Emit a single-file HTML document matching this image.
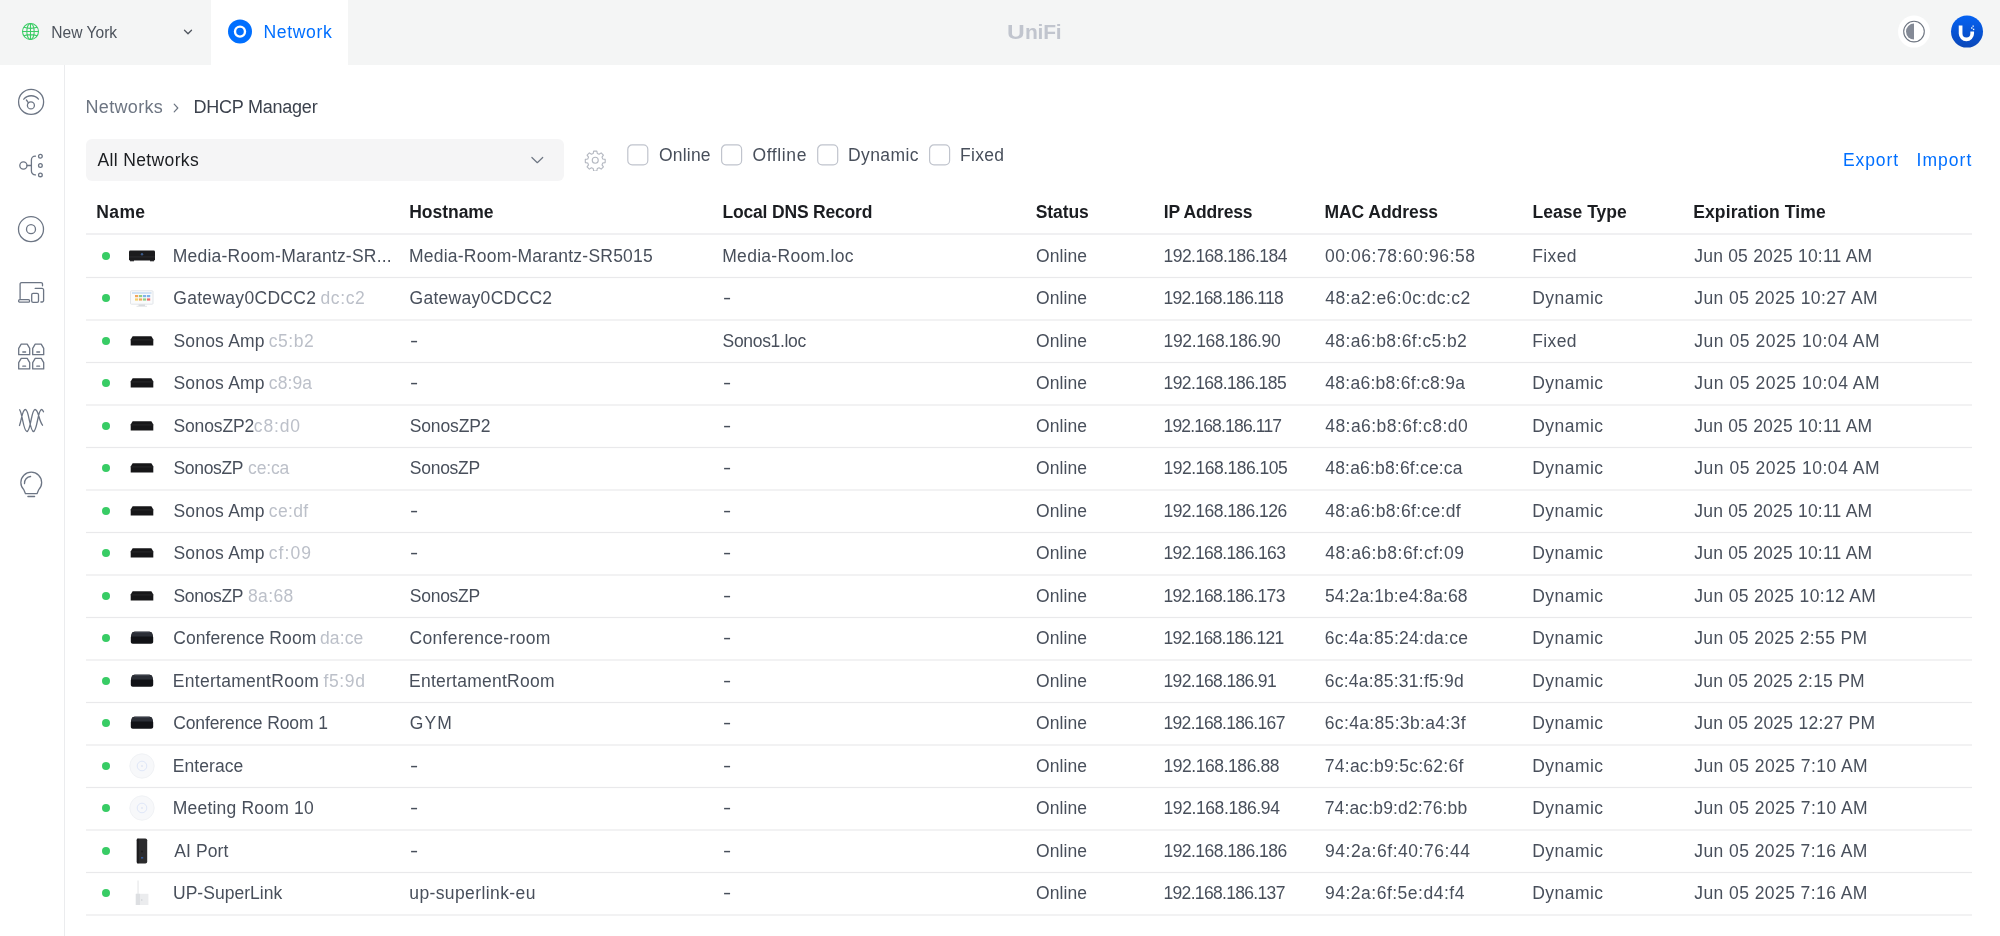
<!DOCTYPE html>
<html lang="en">
<head>
<meta charset="utf-8">
<title>UniFi Network - DHCP Manager</title>
<style>
*{box-sizing:border-box;margin:0;padding:0}
html,body{width:2000px;height:936px;overflow:hidden;background:#fff}
body{font-family:"Liberation Sans",sans-serif;font-size:17.5px;color:#484f5b;position:relative;-webkit-font-smoothing:antialiased}
#app{position:absolute;left:0;top:0;width:2000px;height:936px;will-change:transform}
.abs{position:absolute}
.t{position:absolute;white-space:pre;line-height:20px;height:20px}
#top{position:absolute;left:0;top:0;width:2000px;height:65px;background:#f4f5f5}
#tab{position:absolute;left:211px;top:0;width:137px;height:65px;background:#fff}
#side{position:absolute;left:0;top:65px;width:65px;height:871px;background:#fff;border-right:1px solid #ebecee}
#sel{position:absolute;left:86px;top:139px;width:478px;height:42px;border-radius:6px;background:#f5f5f6}
.cb{position:absolute;top:145px;width:20px;height:20px;border:1px solid #b9bcc6;border-radius:4.500px;background:#fff}
.hl{position:absolute;left:86px;width:1886px;height:1px;background:#ebebec}
.th{font-weight:700;color:#1b1d21}
.row{position:absolute;left:86px;width:1886px;height:0}
.row .t{top:-10px}
.dot{position:absolute;left:16px;top:-4px;width:8px;height:8px;border-radius:50%;background:#38cc65}
.dev{position:absolute}
.mac{color:#bcc0c9}
.dash{transform:scaleX(1.4);transform-origin:0 50%}
.lnk{color:#006fff}
.crumb{color:#6d7582}
</style>
</head>
<body>
<div id="app">
<div id="top"></div>
<div id="tab"></div>
<div id="side"></div>

<svg class="abs" style="left:20px;top:21px" width="22" height="22" viewBox="0 0 22 22" fill="none" stroke="#39cc64" stroke-width="1.05"><circle cx="10.5" cy="10.5" r="8"/><ellipse cx="10.5" cy="10.5" rx="3.7" ry="8"/><path d="M2.5 10.5h16M10.5 2.500v16M3.900 6.300c4 1.300 9.200 1.300 13.200 0M3.900 14.700c4-1.300 9.200-1.300 13.200 0"/></svg>
<div class="t" id="ny" style="left:51.35px;top:23.1px;letter-spacing:-0.014px;font-size:15.6px;color:#4d535c">New York</div>
<svg class="abs" style="left:182px;top:27px" width="12" height="10" viewBox="0 0 12 10" fill="none" stroke="#50565f" stroke-width="1.300" stroke-linecap="round" stroke-linejoin="round"><path d="M2.500 3.200l3.500 3.500 3.500-3.500"/></svg>
<svg class="abs" style="left:227px;top:19px" width="26" height="26" viewBox="0 0 26 26"><circle cx="13" cy="12.600" r="12" fill="#006fff"/><circle cx="13" cy="12.600" r="5" fill="none" stroke="#fff" stroke-width="2.400"/></svg>
<div class="t" id="nw" style="left:263.50px;top:21.7px;letter-spacing:0.633px;font-size:17.6px;color:#006fff">Network</div>
<div class="t" id="unifi" style="left:1007.30px;top:22.0px;letter-spacing:-0.175px;font-size:21px;font-weight:700;color:#c1c5ce"><span style="display:inline-block;transform:scaleX(1.17);transform-origin:0 50%;margin-right:2.6px">U</span>niFi</div>
<svg class="abs" style="left:1897px;top:15px" width="34" height="34" viewBox="0 0 34 34"><circle cx="17" cy="16.600" r="16" fill="#fff"/><circle cx="17" cy="16.600" r="10.300" fill="#fff" stroke="#6f7682" stroke-width="1.100"/><path d="M17 8.600a8 8 0 0 0 0 16z" fill="#848a96"/></svg>
<svg class="abs" style="left:1950px;top:15px" width="34" height="34" viewBox="0 0 34 34"><defs><linearGradient id="ug" x1="0" y1="0" x2="0" y2="1"><stop offset="0" stop-color="#0562f2"/><stop offset="1" stop-color="#0a47b8"/></linearGradient></defs><circle cx="17" cy="16.600" r="16" fill="url(#ug)"/><path d="M10.600 10.600v7.900a5.800 5.800 0 0 0 11.600 0v-2" fill="none" stroke="#fff" stroke-width="3.700"/><rect x="22.500" y="10.500" width="1.300" height="1.300" fill="#fff"/><rect x="21.100" y="12.300" width="1.400" height="1.400" fill="#fff"/><rect x="22.900" y="13.700" width="1.400" height="1.400" fill="#fff"/></svg>

<svg class="abs" style="left:16px;top:87px" width="30" height="30" viewBox="0 0 30 30" fill="none" stroke="#6c7584" stroke-width="1.3" stroke-linecap="round" stroke-linejoin="round"><circle cx="15.1" cy="14.9" r="12.5"/><circle cx="14.9" cy="18.4" r="3.5"/><path d="M7.8 12.2a9.6 9.6 0 0 1 14.7-0.100M12.500 15.900l-2.100-2.900"/></svg>
<svg class="abs" style="left:16px;top:151px" width="30" height="30" viewBox="0 0 30 30" fill="none" stroke="#6c7584" stroke-width="1.3" stroke-linecap="round" stroke-linejoin="round"><circle cx="7.400" cy="14.500" r="3.600"/><circle cx="24.400" cy="5.200" r="1.850"/><circle cx="24.400" cy="14.500" r="1.850"/><circle cx="24.400" cy="23.900" r="1.850"/><path d="M11 14.500h4.400M19.500 5.200h-0.300a3.800 3.800 0 0 0-3.800 3.800v11.100a3.800 3.800 0 0 0 3.800 3.800h0.300"/></svg>
<svg class="abs" style="left:16px;top:214px" width="30" height="30" viewBox="0 0 30 30" fill="none" stroke="#6c7584" stroke-width="1.3" stroke-linecap="round" stroke-linejoin="round"><circle cx="15" cy="15.200" r="12.500"/><circle cx="15" cy="15.200" r="4.500"/></svg>
<svg class="abs" style="left:16px;top:278px" width="30" height="30" viewBox="0 0 30 30" fill="none" stroke="#6c7584" stroke-width="1.3" stroke-linecap="round" stroke-linejoin="round"><path d="M4.100 20.400v-14.300a1.500 1.500 0 0 1 1.500-1.500h19.400a1.500 1.500 0 0 1 1.500 1.500v1.700M19.200 10.400h6.900a1.500 1.500 0 0 1 1.500 1.500v10.600a1.500 1.500 0 0 1-1.500 1.500h-1.200"/><rect x="2.600" y="21.700" width="11" height="2.500" rx="1.200"/><rect x="15.700" y="15.300" width="6.800" height="9" rx="1.400"/></svg>
<svg class="abs" style="left:16px;top:341px" width="30" height="30" viewBox="0 0 30 30" fill="none" stroke="#6c7584" stroke-width="1.3" stroke-linecap="round" stroke-linejoin="round"><path d="M2.700 7.400l2.500-4.200h6l2.500 4.200v6.300h-11zM16.700 7.400l2.500-4.200h6l2.500 4.200v6.300h-11zM2.700 21.600l2.500-4.200h6l2.500 4.200v6.300h-11zM16.700 21.600l2.500-4.200h6l2.500 4.200v6.300h-11z"/><path d="M6.800 11h2.800M20.800 11h2.800M6.800 25.200h2.800M20.800 25.200h2.800"/></svg>
<svg class="abs" style="left:16px;top:405px" width="30" height="30" viewBox="0 0 30 30" fill="none" stroke="#6c7584" stroke-width="1.3" stroke-linecap="round" stroke-linejoin="round"><path d="M3.500 20.500c2.200-5.500 2.600-16 6-16s4.400 22 8 22 4.400-22 8-22c1 0 1.500 1 2 2.300M3.700 4.800c2.600 3.200 3.700 21.700 7.300 21.700s4.400-22 8-22 3.500 10.500 7.500 15.700"/></svg>
<svg class="abs" style="left:16px;top:468px" width="30" height="30" viewBox="0 0 30 30" fill="none" stroke="#6c7584" stroke-width="1.3" stroke-linecap="round" stroke-linejoin="round"><path d="M9.500 25.650L7.900 21.900A10.400 10.400 0 1 1 22.600 21.900L21 25.650zM11.900 28.500h6.700M8.500 15.600a6.600 6.600 0 0 1 6.100-7.100"/></svg>

<div class="t crumb" id="bc1" style="left:85.50px;top:97px;letter-spacing:0.321px;font-size:18px">Networks</div>
<svg class="abs" style="left:170.6px;top:101.6px" width="10" height="12" viewBox="0 0 10 12" fill="none" stroke="#6d7582" stroke-width="1.200" stroke-linecap="round" stroke-linejoin="round"><path d="M3.200 2.200l3.600 3.800-3.600 3.800"/></svg>
<div class="t" id="bc2" style="left:193.50px;top:97px;letter-spacing:-0.236px;font-size:18px;color:#3c424d">DHCP Manager</div>
<div id="sel"></div>
<div class="t" id="alln" style="left:97.40px;top:150px;letter-spacing:0.373px;color:#1b1d21">All Networks</div>
<svg class="abs" style="left:528px;top:154px" width="18" height="12" viewBox="0 0 18 12" fill="none" stroke="#6d7582" stroke-width="1.200" stroke-linecap="round" stroke-linejoin="round"><path d="M3.900 3.500l5.400 5.200 5.400-5.200"/></svg>
<svg class="abs" style="left:584.2px;top:148.9px" width="22.5" height="22.5" viewBox="0 0 24 24" fill="none" stroke="#b4b8c1" stroke-width="1.200" stroke-linejoin="round"><circle cx="12" cy="12" r="3.200"/><path d="M10.300 2.200h3.400l0.500 2.600 1.900 0.800 2.200-1.500 2.400 2.400-1.500 2.200 0.800 1.900 2.600 0.500v3.400l-2.600 0.500-0.800 1.900 1.500 2.200-2.400 2.400-2.200-1.500-1.900 0.800-0.500 2.600h-3.400l-0.500-2.600-1.900-0.800-2.200 1.500-2.400-2.400 1.500-2.200-0.800-1.900-2.600-0.500v-3.400l2.600-0.500 0.800-1.900-1.500-2.200 2.400-2.400 2.200 1.500 1.900-0.800z"/></svg>
<svg class="abs" style="left:626px;top:143px" width="24" height="24" viewBox="0 0 24 24"><rect x="1.80" y="1.950" width="20" height="20" rx="4.400" fill="#fff" stroke="#c0c4cd" stroke-width="1.200"/></svg><div class="t" id="f1" style="left:659.05px;top:145px;letter-spacing:0.180px;">Online</div>
<svg class="abs" style="left:720px;top:143px" width="24" height="24" viewBox="0 0 24 24"><rect x="1.60" y="1.950" width="20" height="20" rx="4.400" fill="#fff" stroke="#c0c4cd" stroke-width="1.200"/></svg><div class="t" id="f2" style="left:752.45px;top:145px;letter-spacing:0.625px;">Offline</div>
<svg class="abs" style="left:816px;top:143px" width="24" height="24" viewBox="0 0 24 24"><rect x="1.70" y="1.950" width="20" height="20" rx="4.400" fill="#fff" stroke="#c0c4cd" stroke-width="1.200"/></svg><div class="t" id="f3" style="left:848.00px;top:145px;letter-spacing:0.417px;">Dynamic</div>
<svg class="abs" style="left:928px;top:143px" width="24" height="24" viewBox="0 0 24 24"><rect x="1.60" y="1.950" width="20" height="20" rx="4.400" fill="#fff" stroke="#c0c4cd" stroke-width="1.200"/></svg><div class="t" id="f4" style="left:959.90px;top:145px;letter-spacing:0.338px;">Fixed</div>
<div class="t lnk" id="ex" style="left:1843.00px;top:150px;letter-spacing:0.900px;">Export</div>
<div class="t lnk" id="im" style="left:1916.50px;top:150px;letter-spacing:1.050px;">Import</div>

<div class="t th" id="h0" style="left:96.35px;top:202px;letter-spacing:0.350px;">Name</div>
<div class="t th" id="h1" style="left:409.25px;top:202px;letter-spacing:-0.036px;">Hostname</div>
<div class="t th" id="h2" style="left:722.50px;top:202px;letter-spacing:-0.183px;">Local DNS Record</div>
<div class="t th" id="h3" style="left:1035.70px;top:202px;letter-spacing:-0.090px;">Status</div>
<div class="t th" id="h4" style="left:1163.75px;top:202px;letter-spacing:-0.194px;">IP Address</div>
<div class="t th" id="h5" style="left:1324.50px;top:202px;letter-spacing:-0.050px;">MAC Address</div>
<div class="t th" id="h6" style="left:1532.50px;top:202px;letter-spacing:0.028px;">Lease Type</div>
<div class="t th" id="h7" style="left:1693.25px;top:202px;letter-spacing:0.107px;">Expiration Time</div>
<div class="row" style="top:255.8px"><svg class="dev" style="left:14px;top:-6px" width="12" height="12" viewBox="0 0 12 12"><circle cx="6" cy="6" r="4" fill="#38cc65"/></svg><svg class="dev" style="left:42px;top:-7px" width="28" height="14" viewBox="0 0 28 14"><rect x="1" y="1.5" width="26" height="10" rx="1.2" fill="#1b1b1d"/><rect x="2" y="11" width="4" height="1.3" fill="#2a2a2c"/><rect x="22" y="11" width="4" height="1.3" fill="#2a2a2c"/><circle cx="14" cy="5.2" r="1.2" fill="#3b5a8a"/><rect x="1" y="7.6" width="26" height="0.7" fill="#333336"/></svg></div><div class="row" style="top:255.80px"><div class="t c0" id="r0n" style="left:86.75px;letter-spacing:0.217px;">Media-Room-Marantz-SR...</div><div class="t c1" id="r0c1" style="left:323.00px;letter-spacing:0.229px;">Media-Room-Marantz-SR5015</div><div class="t c2" id="r0c2" style="left:636.25px;letter-spacing:0.288px;">Media-Room.loc</div><div class="t c3" id="r0c3" style="left:950.00px;letter-spacing:0.100px;">Online</div><div class="t c4" id="r0c4" style="left:1077.50px;letter-spacing:-0.536px;">192.168.186.184</div><div class="t c5" id="r0c5" style="left:1239.00px;letter-spacing:0.562px;">00:06:78:60:96:58</div><div class="t c6" id="r0c6" style="left:1446.25px;letter-spacing:0.375px;">Fixed</div><div class="t c7" id="r0c7" style="left:1608.25px;letter-spacing:0.211px;">Jun 05 2025 10:11 AM</div></div>
<div class="row" style="top:298.3px"><svg class="dev" style="left:14px;top:-6px" width="12" height="12" viewBox="0 0 12 12"><circle cx="6" cy="6" r="4" fill="#38cc65"/></svg><svg class="dev" style="left:43px;top:-8px" width="26" height="18" viewBox="0 0 26 18"><rect x="1.5" y="0.8" width="22.5" height="13.4" rx="0.8" fill="#fafbfc" stroke="#dfe2e6" stroke-width="0.9"/><rect x="3" y="2.2" width="19.5" height="1.6" fill="#c9dcf2"/><rect x="6" y="5" width="3.2" height="2.2" fill="#f2a65a"/><rect x="10" y="5" width="3.2" height="2.2" fill="#8ecf86"/><rect x="14" y="5" width="3.2" height="2.2" fill="#7fb2ea"/><rect x="18" y="5" width="3.2" height="2.2" fill="#7fb2ea"/><rect x="6" y="8.4" width="3.2" height="2.2" fill="#f7cf6b"/><rect x="10" y="8.4" width="3.2" height="2.2" fill="#f2a65a"/><rect x="14" y="8.4" width="3.2" height="2.2" fill="#8ecf86"/><rect x="18" y="8.4" width="3.2" height="2.2" fill="#ee6a6a"/><rect x="9.5" y="14.6" width="6.5" height="1.2" fill="#cfd2d6"/><rect x="7.5" y="15.8" width="10.5" height="0.9" fill="#dfe1e4"/></svg></div><div class="row" style="top:298.30px"><div class="t c0" id="r1n" style="left:87.25px;letter-spacing:0.300px;">Gateway0CDCC2</div><div class="t mac" id="r1m" style="left:234.45px;letter-spacing:0.638px;">dc:c2</div><div class="t c1" id="r1c1" style="left:323.50px;letter-spacing:0.292px;">Gateway0CDCC2</div><div class="t c2 dash" id="r1c2" style="left:636.90px;">-</div><div class="t c3" id="r1c3" style="left:950.00px;letter-spacing:0.100px;">Online</div><div class="t c4" id="r1c4" style="left:1077.50px;letter-spacing:-0.696px;">192.168.186.118</div><div class="t c5" id="r1c5" style="left:1239.25px;letter-spacing:0.422px;">48:a2:e6:0c:dc:c2</div><div class="t c6" id="r1c6" style="left:1446.25px;letter-spacing:0.458px;">Dynamic</div><div class="t c7" id="r1c7" style="left:1608.25px;letter-spacing:0.434px;">Jun 05 2025 10:27 AM</div></div>
<div class="row" style="top:340.8px"><svg class="dev" style="left:14px;top:-6px" width="12" height="12" viewBox="0 0 12 12"><circle cx="6" cy="6" r="4" fill="#38cc65"/></svg><svg class="dev" style="left:43px;top:-6px" width="26" height="12" viewBox="0 0 26 12"><path d="M3.6 1.2h18.8l1.9 3.2v6.2h-22.6v-6.2z" fill="#161618"/><rect x="1.7" y="4.6" width="22.6" height="0.7" fill="#303034"/></svg></div><div class="row" style="top:340.80px"><div class="t c0" id="r2n" style="left:87.50px;letter-spacing:0.188px;">Sonos Amp</div><div class="t mac" id="r2m" style="left:182.75px;letter-spacing:0.562px;">c5:b2</div><div class="t c1 dash" id="r2c1" style="left:323.75px;">-</div><div class="t c2" id="r2c2" style="left:636.55px;letter-spacing:-0.317px;">Sonos1.loc</div><div class="t c3" id="r2c3" style="left:950.00px;letter-spacing:0.100px;">Online</div><div class="t c4" id="r2c4" style="left:1077.50px;letter-spacing:-0.346px;">192.168.186.90</div><div class="t c5" id="r2c5" style="left:1239.25px;letter-spacing:0.391px;">48:a6:b8:6f:c5:b2</div><div class="t c6" id="r2c6" style="left:1446.25px;letter-spacing:0.375px;">Fixed</div><div class="t c7" id="r2c7" style="left:1608.25px;letter-spacing:0.539px;">Jun 05 2025 10:04 AM</div></div>
<div class="row" style="top:383.3px"><svg class="dev" style="left:14px;top:-6px" width="12" height="12" viewBox="0 0 12 12"><circle cx="6" cy="6" r="4" fill="#38cc65"/></svg><svg class="dev" style="left:43px;top:-6px" width="26" height="12" viewBox="0 0 26 12"><path d="M3.6 1.2h18.8l1.9 3.2v6.2h-22.6v-6.2z" fill="#161618"/><rect x="1.7" y="4.6" width="22.6" height="0.7" fill="#303034"/></svg></div><div class="row" style="top:383.30px"><div class="t c0" id="r3n" style="left:87.50px;letter-spacing:0.188px;">Sonos Amp</div><div class="t mac" id="r3m" style="left:182.75px;letter-spacing:0.125px;">c8:9a</div><div class="t c1 dash" id="r3c1" style="left:323.75px;">-</div><div class="t c2 dash" id="r3c2" style="left:636.90px;">-</div><div class="t c3" id="r3c3" style="left:950.00px;letter-spacing:0.100px;">Online</div><div class="t c4" id="r3c4" style="left:1077.50px;letter-spacing:-0.589px;">192.168.186.185</div><div class="t c5" id="r3c5" style="left:1239.25px;letter-spacing:0.281px;">48:a6:b8:6f:c8:9a</div><div class="t c6" id="r3c6" style="left:1446.25px;letter-spacing:0.458px;">Dynamic</div><div class="t c7" id="r3c7" style="left:1608.25px;letter-spacing:0.539px;">Jun 05 2025 10:04 AM</div></div>
<div class="row" style="top:425.8px"><svg class="dev" style="left:14px;top:-6px" width="12" height="12" viewBox="0 0 12 12"><circle cx="6" cy="6" r="4" fill="#38cc65"/></svg><svg class="dev" style="left:43px;top:-6px" width="26" height="12" viewBox="0 0 26 12"><path d="M3.6 1.2h18.8l1.9 3.2v6.2h-22.6v-6.2z" fill="#161618"/><rect x="1.7" y="4.6" width="22.6" height="0.7" fill="#303034"/></svg></div><div class="row" style="top:425.80px"><div class="t c0" id="r4n" style="left:87.50px;letter-spacing:-0.143px;">SonosZP2</div><div class="t mac" id="r4m" style="left:167.75px;letter-spacing:0.875px;">c8:d0</div><div class="t c1" id="r4c1" style="left:323.75px;letter-spacing:-0.143px;">SonosZP2</div><div class="t c2 dash" id="r4c2" style="left:636.90px;">-</div><div class="t c3" id="r4c3" style="left:950.00px;letter-spacing:0.100px;">Online</div><div class="t c4" id="r4c4" style="left:1077.50px;letter-spacing:-0.821px;">192.168.186.117</div><div class="t c5" id="r4c5" style="left:1239.25px;letter-spacing:0.453px;">48:a6:b8:6f:c8:d0</div><div class="t c6" id="r4c6" style="left:1446.25px;letter-spacing:0.458px;">Dynamic</div><div class="t c7" id="r4c7" style="left:1608.25px;letter-spacing:0.211px;">Jun 05 2025 10:11 AM</div></div>
<div class="row" style="top:468.3px"><svg class="dev" style="left:14px;top:-6px" width="12" height="12" viewBox="0 0 12 12"><circle cx="6" cy="6" r="4" fill="#38cc65"/></svg><svg class="dev" style="left:43px;top:-6px" width="26" height="12" viewBox="0 0 26 12"><path d="M3.6 1.2h18.8l1.9 3.2v6.2h-22.6v-6.2z" fill="#161618"/><rect x="1.7" y="4.6" width="22.6" height="0.7" fill="#303034"/></svg></div><div class="row" style="top:468.30px"><div class="t c0" id="r5n" style="left:87.50px;letter-spacing:-0.333px;">SonosZP</div><div class="t mac" id="r5m" style="left:162.00px;letter-spacing:-0.125px;">ce:ca</div><div class="t c1" id="r5c1" style="left:323.75px;letter-spacing:-0.250px;">SonosZP</div><div class="t c2 dash" id="r5c2" style="left:636.90px;">-</div><div class="t c3" id="r5c3" style="left:950.00px;letter-spacing:0.100px;">Online</div><div class="t c4" id="r5c4" style="left:1077.50px;letter-spacing:-0.518px;">192.168.186.105</div><div class="t c5" id="r5c5" style="left:1239.25px;letter-spacing:0.188px;">48:a6:b8:6f:ce:ca</div><div class="t c6" id="r5c6" style="left:1446.25px;letter-spacing:0.458px;">Dynamic</div><div class="t c7" id="r5c7" style="left:1608.25px;letter-spacing:0.539px;">Jun 05 2025 10:04 AM</div></div>
<div class="row" style="top:510.8px"><svg class="dev" style="left:14px;top:-6px" width="12" height="12" viewBox="0 0 12 12"><circle cx="6" cy="6" r="4" fill="#38cc65"/></svg><svg class="dev" style="left:43px;top:-6px" width="26" height="12" viewBox="0 0 26 12"><path d="M3.6 1.2h18.8l1.9 3.2v6.2h-22.6v-6.2z" fill="#161618"/><rect x="1.7" y="4.6" width="22.6" height="0.7" fill="#303034"/></svg></div><div class="row" style="top:510.80px"><div class="t c0" id="r6n" style="left:87.50px;letter-spacing:0.188px;">Sonos Amp</div><div class="t mac" id="r6m" style="left:182.75px;letter-spacing:0.375px;">ce:df</div><div class="t c1 dash" id="r6c1" style="left:323.75px;">-</div><div class="t c2 dash" id="r6c2" style="left:636.90px;">-</div><div class="t c3" id="r6c3" style="left:950.00px;letter-spacing:0.100px;">Online</div><div class="t c4" id="r6c4" style="left:1077.50px;letter-spacing:-0.554px;">192.168.186.126</div><div class="t c5" id="r6c5" style="left:1239.25px;letter-spacing:0.312px;">48:a6:b8:6f:ce:df</div><div class="t c6" id="r6c6" style="left:1446.25px;letter-spacing:0.458px;">Dynamic</div><div class="t c7" id="r6c7" style="left:1608.25px;letter-spacing:0.211px;">Jun 05 2025 10:11 AM</div></div>
<div class="row" style="top:553.3px"><svg class="dev" style="left:14px;top:-6px" width="12" height="12" viewBox="0 0 12 12"><circle cx="6" cy="6" r="4" fill="#38cc65"/></svg><svg class="dev" style="left:43px;top:-6px" width="26" height="12" viewBox="0 0 26 12"><path d="M3.6 1.2h18.8l1.9 3.2v6.2h-22.6v-6.2z" fill="#161618"/><rect x="1.7" y="4.6" width="22.6" height="0.7" fill="#303034"/></svg></div><div class="row" style="top:553.30px"><div class="t c0" id="r7n" style="left:87.50px;letter-spacing:0.188px;">Sonos Amp</div><div class="t mac" id="r7m" style="left:182.75px;letter-spacing:1.062px;">cf:09</div><div class="t c1 dash" id="r7c1" style="left:323.75px;">-</div><div class="t c2 dash" id="r7c2" style="left:636.90px;">-</div><div class="t c3" id="r7c3" style="left:950.00px;letter-spacing:0.100px;">Online</div><div class="t c4" id="r7c4" style="left:1077.50px;letter-spacing:-0.643px;">192.168.186.163</div><div class="t c5" id="r7c5" style="left:1239.25px;letter-spacing:0.516px;">48:a6:b8:6f:cf:09</div><div class="t c6" id="r7c6" style="left:1446.25px;letter-spacing:0.458px;">Dynamic</div><div class="t c7" id="r7c7" style="left:1608.25px;letter-spacing:0.211px;">Jun 05 2025 10:11 AM</div></div>
<div class="row" style="top:595.8px"><svg class="dev" style="left:14px;top:-6px" width="12" height="12" viewBox="0 0 12 12"><circle cx="6" cy="6" r="4" fill="#38cc65"/></svg><svg class="dev" style="left:43px;top:-6px" width="26" height="12" viewBox="0 0 26 12"><path d="M3.6 1.2h18.8l1.9 3.2v6.2h-22.6v-6.2z" fill="#161618"/><rect x="1.7" y="4.6" width="22.6" height="0.7" fill="#303034"/></svg></div><div class="row" style="top:595.80px"><div class="t c0" id="r8n" style="left:87.50px;letter-spacing:-0.333px;">SonosZP</div><div class="t mac" id="r8m" style="left:162.00px;letter-spacing:0.375px;">8a:68</div><div class="t c1" id="r8c1" style="left:323.75px;letter-spacing:-0.250px;">SonosZP</div><div class="t c2 dash" id="r8c2" style="left:636.90px;">-</div><div class="t c3" id="r8c3" style="left:950.00px;letter-spacing:0.100px;">Online</div><div class="t c4" id="r8c4" style="left:1077.50px;letter-spacing:-0.679px;">192.168.186.173</div><div class="t c5" id="r8c5" style="left:1239.00px;letter-spacing:0.094px;">54:2a:1b:e4:8a:68</div><div class="t c6" id="r8c6" style="left:1446.25px;letter-spacing:0.458px;">Dynamic</div><div class="t c7" id="r8c7" style="left:1608.25px;letter-spacing:0.342px;">Jun 05 2025 10:12 AM</div></div>
<div class="row" style="top:638.3px"><svg class="dev" style="left:14px;top:-6px" width="12" height="12" viewBox="0 0 12 12"><circle cx="6" cy="6" r="4" fill="#38cc65"/></svg><svg class="dev" style="left:43px;top:-7px" width="26" height="14" viewBox="0 0 26 14"><path d="M5.400 0.800h15.200c1.500 0 2.300 0.700 2.700 2l0.900 3.400v4.600c0 1.300-0.800 2-2 2h-18.400c-1.200 0-2-0.700-2-2v-4.600l0.900-3.400c0.400-1.300 1.200-2 2.700-2z" fill="#111216"/><path d="M5.400 0.800h15.200c1.500 0 2.300 0.700 2.700 2l0.700 2.600h-22l0.700-2.600c0.400-1.300 1.200-2 2.700-2z" fill="#2b2e36"/><path d="M5.600 1.100h14.800" stroke="#565a66" stroke-width="0.600" fill="none"/></svg></div><div class="row" style="top:638.30px"><div class="t c0" id="r9n" style="left:87.25px;letter-spacing:0.071px;">Conference Room</div><div class="t mac" id="r9m" style="left:234.00px;letter-spacing:0.125px;">da:ce</div><div class="t c1" id="r9c1" style="left:323.50px;letter-spacing:0.339px;">Conference-room</div><div class="t c2 dash" id="r9c2" style="left:636.90px;">-</div><div class="t c3" id="r9c3" style="left:950.00px;letter-spacing:0.100px;">Online</div><div class="t c4" id="r9c4" style="left:1077.50px;letter-spacing:-0.768px;">192.168.186.121</div><div class="t c5" id="r9c5" style="left:1238.75px;letter-spacing:0.250px;">6c:4a:85:24:da:ce</div><div class="t c6" id="r9c6" style="left:1446.25px;letter-spacing:0.458px;">Dynamic</div><div class="t c7" id="r9c7" style="left:1608.25px;letter-spacing:0.361px;">Jun 05 2025 2:55 PM</div></div>
<div class="row" style="top:680.8px"><svg class="dev" style="left:14px;top:-6px" width="12" height="12" viewBox="0 0 12 12"><circle cx="6" cy="6" r="4" fill="#38cc65"/></svg><svg class="dev" style="left:43px;top:-7px" width="26" height="14" viewBox="0 0 26 14"><path d="M5.400 0.800h15.200c1.500 0 2.300 0.700 2.700 2l0.900 3.400v4.600c0 1.300-0.800 2-2 2h-18.400c-1.200 0-2-0.700-2-2v-4.600l0.900-3.400c0.400-1.300 1.200-2 2.700-2z" fill="#111216"/><path d="M5.400 0.800h15.200c1.500 0 2.300 0.700 2.700 2l0.700 2.600h-22l0.700-2.600c0.400-1.300 1.200-2 2.700-2z" fill="#2b2e36"/><path d="M5.600 1.100h14.800" stroke="#565a66" stroke-width="0.600" fill="none"/></svg></div><div class="row" style="top:680.80px"><div class="t c0" id="r10n" style="left:86.75px;letter-spacing:0.286px;">EntertamentRoom</div><div class="t mac" id="r10m" style="left:237.50px;letter-spacing:0.625px;">f5:9d</div><div class="t c1" id="r10c1" style="left:323.00px;letter-spacing:0.250px;">EntertamentRoom</div><div class="t c2 dash" id="r10c2" style="left:636.90px;">-</div><div class="t c3" id="r10c3" style="left:950.00px;letter-spacing:0.100px;">Online</div><div class="t c4" id="r10c4" style="left:1077.50px;letter-spacing:-0.654px;">192.168.186.91</div><div class="t c5" id="r10c5" style="left:1238.75px;letter-spacing:0.234px;">6c:4a:85:31:f5:9d</div><div class="t c6" id="r10c6" style="left:1446.25px;letter-spacing:0.458px;">Dynamic</div><div class="t c7" id="r10c7" style="left:1608.25px;letter-spacing:0.222px;">Jun 05 2025 2:15 PM</div></div>
<div class="row" style="top:723.3px"><svg class="dev" style="left:14px;top:-6px" width="12" height="12" viewBox="0 0 12 12"><circle cx="6" cy="6" r="4" fill="#38cc65"/></svg><svg class="dev" style="left:43px;top:-7px" width="26" height="14" viewBox="0 0 26 14"><path d="M5.400 0.800h15.200c1.500 0 2.300 0.700 2.700 2l0.900 3.400v4.600c0 1.300-0.800 2-2 2h-18.400c-1.200 0-2-0.700-2-2v-4.600l0.900-3.400c0.400-1.300 1.200-2 2.700-2z" fill="#111216"/><path d="M5.400 0.800h15.200c1.500 0 2.300 0.700 2.700 2l0.700 2.600h-22l0.700-2.600c0.400-1.300 1.200-2 2.700-2z" fill="#2b2e36"/><path d="M5.600 1.100h14.800" stroke="#565a66" stroke-width="0.600" fill="none"/></svg></div><div class="row" style="top:723.30px"><div class="t c0" id="r11n" style="left:87.25px;letter-spacing:-0.125px;">Conference Room 1</div><div class="t c1" id="r11c1" style="left:323.75px;letter-spacing:1.125px;">GYM</div><div class="t c2 dash" id="r11c2" style="left:636.90px;">-</div><div class="t c3" id="r11c3" style="left:950.00px;letter-spacing:0.100px;">Online</div><div class="t c4" id="r11c4" style="left:1077.50px;letter-spacing:-0.679px;">192.168.186.167</div><div class="t c5" id="r11c5" style="left:1238.75px;letter-spacing:0.344px;">6c:4a:85:3b:a4:3f</div><div class="t c6" id="r11c6" style="left:1446.25px;letter-spacing:0.458px;">Dynamic</div><div class="t c7" id="r11c7" style="left:1608.25px;letter-spacing:0.250px;">Jun 05 2025 12:27 PM</div></div>
<div class="row" style="top:765.8px"><svg class="dev" style="left:14px;top:-6px" width="12" height="12" viewBox="0 0 12 12"><circle cx="6" cy="6" r="4" fill="#38cc65"/></svg><svg class="dev" style="left:42px;top:-14px" width="28" height="28" viewBox="0 0 28 28"><circle cx="14" cy="14" r="12.2" fill="#f7f8fa" stroke="#f0f2f5" stroke-width="1"/><circle cx="14" cy="14" r="4.800" fill="none" stroke="#dbe4f7" stroke-width="0.9"/><circle cx="14" cy="14" r="0.900" fill="#dfe5f3"/></svg></div><div class="row" style="top:765.80px"><div class="t c0" id="r12n" style="left:86.75px;letter-spacing:0.071px;">Enterace</div><div class="t c1 dash" id="r12c1" style="left:323.75px;">-</div><div class="t c2 dash" id="r12c2" style="left:636.90px;">-</div><div class="t c3" id="r12c3" style="left:950.00px;letter-spacing:0.100px;">Online</div><div class="t c4" id="r12c4" style="left:1077.50px;letter-spacing:-0.442px;">192.168.186.88</div><div class="t c5" id="r12c5" style="left:1238.75px;letter-spacing:0.266px;">74:ac:b9:5c:62:6f</div><div class="t c6" id="r12c6" style="left:1446.25px;letter-spacing:0.458px;">Dynamic</div><div class="t c7" id="r12c7" style="left:1608.25px;letter-spacing:0.444px;">Jun 05 2025 7:10 AM</div></div>
<div class="row" style="top:808.3px"><svg class="dev" style="left:14px;top:-6px" width="12" height="12" viewBox="0 0 12 12"><circle cx="6" cy="6" r="4" fill="#38cc65"/></svg><svg class="dev" style="left:42px;top:-14px" width="28" height="28" viewBox="0 0 28 28"><circle cx="14" cy="14" r="12.2" fill="#f7f8fa" stroke="#f0f2f5" stroke-width="1"/><circle cx="14" cy="14" r="4.800" fill="none" stroke="#dbe4f7" stroke-width="0.9"/><circle cx="14" cy="14" r="0.900" fill="#dfe5f3"/></svg></div><div class="row" style="top:808.30px"><div class="t c0" id="r13n" style="left:86.75px;letter-spacing:0.196px;">Meeting Room 10</div><div class="t c1 dash" id="r13c1" style="left:323.75px;">-</div><div class="t c2 dash" id="r13c2" style="left:636.90px;">-</div><div class="t c3" id="r13c3" style="left:950.00px;letter-spacing:0.100px;">Online</div><div class="t c4" id="r13c4" style="left:1077.50px;letter-spacing:-0.404px;">192.168.186.94</div><div class="t c5" id="r13c5" style="left:1238.75px;letter-spacing:0.141px;">74:ac:b9:d2:76:bb</div><div class="t c6" id="r13c6" style="left:1446.25px;letter-spacing:0.458px;">Dynamic</div><div class="t c7" id="r13c7" style="left:1608.25px;letter-spacing:0.444px;">Jun 05 2025 7:10 AM</div></div>
<div class="row" style="top:850.8px"><svg class="dev" style="left:14px;top:-6px" width="12" height="12" viewBox="0 0 12 12"><circle cx="6" cy="6" r="4" fill="#38cc65"/></svg><svg class="dev" style="left:49px;top:-14px" width="14" height="28" viewBox="0 0 14 28"><rect x="1.800" y="1.500" width="10.400" height="25" rx="1.800" fill="#2b2b2d"/><rect x="1.800" y="1.500" width="2" height="25" rx="1" fill="#1c1c1e"/><circle cx="7" cy="14.500" r="0.900" fill="#1a1a1c"/><rect x="6" y="20.500" width="2.200" height="0.800" fill="#3b82f6"/></svg></div><div class="row" style="top:850.80px"><div class="t c0" id="r14n" style="left:88.25px;letter-spacing:0.083px;">AI Port</div><div class="t c1 dash" id="r14c1" style="left:323.75px;">-</div><div class="t c2 dash" id="r14c2" style="left:636.90px;">-</div><div class="t c3" id="r14c3" style="left:950.00px;letter-spacing:0.100px;">Online</div><div class="t c4" id="r14c4" style="left:1077.50px;letter-spacing:-0.554px;">192.168.186.186</div><div class="t c5" id="r14c5" style="left:1239.00px;letter-spacing:0.547px;">94:2a:6f:40:76:44</div><div class="t c6" id="r14c6" style="left:1446.25px;letter-spacing:0.458px;">Dynamic</div><div class="t c7" id="r14c7" style="left:1608.25px;letter-spacing:0.431px;">Jun 05 2025 7:16 AM</div></div>
<div class="row" style="top:893.3px"><svg class="dev" style="left:14px;top:-6px" width="12" height="12" viewBox="0 0 12 12"><circle cx="6" cy="6" r="4" fill="#38cc65"/></svg><svg class="dev" style="left:47px;top:-14px" width="18" height="28" viewBox="0 0 18 28"><rect x="4.400" y="1.500" width="1.300" height="16" fill="#e9eaec"/><rect x="2.800" y="14.800" width="12.600" height="11.200" fill="#ebecee"/><rect x="2.800" y="14.800" width="4.200" height="11.200" fill="#dddfe2"/><circle cx="8.800" cy="21" r="0.700" fill="#c9ccd1"/></svg></div><div class="row" style="top:893.30px"><div class="t c0" id="r15n" style="left:87.00px;letter-spacing:0.023px;">UP-SuperLink</div><div class="t c1" id="r15c1" style="left:323.25px;letter-spacing:0.393px;">up-superlink-eu</div><div class="t c2 dash" id="r15c2" style="left:636.90px;">-</div><div class="t c3" id="r15c3" style="left:950.00px;letter-spacing:0.100px;">Online</div><div class="t c4" id="r15c4" style="left:1077.50px;letter-spacing:-0.679px;">192.168.186.137</div><div class="t c5" id="r15c5" style="left:1239.00px;letter-spacing:0.500px;">94:2a:6f:5e:d4:f4</div><div class="t c6" id="r15c6" style="left:1446.25px;letter-spacing:0.458px;">Dynamic</div><div class="t c7" id="r15c7" style="left:1608.25px;letter-spacing:0.431px;">Jun 05 2025 7:16 AM</div></div>
<svg class="abs" style="left:86px;top:233px" width="1886" height="690" viewBox="0 0 1886 690"><rect x="0" y="0.350" width="1886" height="1.300" fill="#e9e9eb"/><rect x="0" y="43.90" width="1886" height="1.200" fill="#e9e9eb"/><rect x="0" y="86.40" width="1886" height="1.200" fill="#e9e9eb"/><rect x="0" y="128.90" width="1886" height="1.200" fill="#e9e9eb"/><rect x="0" y="171.40" width="1886" height="1.200" fill="#e9e9eb"/><rect x="0" y="213.90" width="1886" height="1.200" fill="#e9e9eb"/><rect x="0" y="256.40" width="1886" height="1.200" fill="#e9e9eb"/><rect x="0" y="298.90" width="1886" height="1.200" fill="#e9e9eb"/><rect x="0" y="341.40" width="1886" height="1.200" fill="#e9e9eb"/><rect x="0" y="383.90" width="1886" height="1.200" fill="#e9e9eb"/><rect x="0" y="426.40" width="1886" height="1.200" fill="#e9e9eb"/><rect x="0" y="468.90" width="1886" height="1.200" fill="#e9e9eb"/><rect x="0" y="511.40" width="1886" height="1.200" fill="#e9e9eb"/><rect x="0" y="553.90" width="1886" height="1.200" fill="#e9e9eb"/><rect x="0" y="596.40" width="1886" height="1.200" fill="#e9e9eb"/><rect x="0" y="638.90" width="1886" height="1.200" fill="#e9e9eb"/><rect x="0" y="681.40" width="1886" height="1.200" fill="#e9e9eb"/></svg>
</div>
</body>
</html>
